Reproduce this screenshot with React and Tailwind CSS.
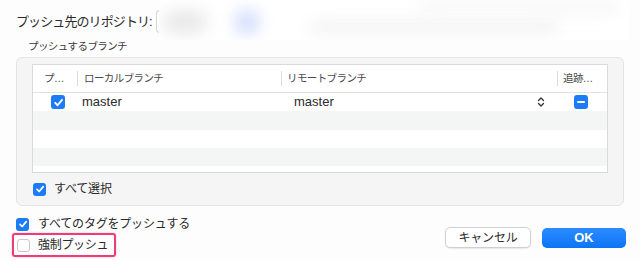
import React from 'react';

const font = { fontFamily: '"Liberation Sans", "Noto Sans CJK JP", sans-serif' };

const Check = ({ size = 13 }) => (
  <span
    className="flex items-center justify-center rounded-[3px] bg-[#1b7cf6] shrink-0"
    style={{ width: size, height: size }}
  >
    <svg width={size - 3} height={size - 3} viewBox="0 0 10 10" fill="none">
      <path d="M2 5.3 L4.2 7.5 L8.2 2.6" stroke="white" strokeWidth="1.7" strokeLinecap="round" strokeLinejoin="round" />
    </svg>
  </span>
);

const Box = () => (
  <span className="block h-[13px] w-[13px] shrink-0 rounded-[3px] border border-[#c9c9c9] bg-white" />
);

const Minus = () => (
  <span className="flex h-[14px] w-[14px] items-center justify-center rounded-[3px] bg-[#1b7cf6]">
    <span className="block h-[2px] w-[8px] rounded-full bg-white" />
  </span>
);

const Stepper = () => (
  <svg width="8" height="12" viewBox="0 0 8 12" fill="none">
    <path d="M1.5 4.5 L4 2 L6.5 4.5" stroke="#333" strokeWidth="1.3" strokeLinecap="round" strokeLinejoin="round" />
    <path d="M1.5 7.5 L4 10 L6.5 7.5" stroke="#333" strokeWidth="1.3" strokeLinecap="round" strokeLinejoin="round" />
  </svg>
);

const Divider = () => <span className="block h-[15px] w-px bg-[#dcdcdc]" />;

export default function App() {
  const rows = [0, 1, 2, 3];

  return (
    <div className="flex h-[261px] w-[640px] flex-col overflow-hidden bg-[#fdfdfd] text-[#2a2a2a]" style={font}>
      {/* repository row */}
      <div className="flex h-[40px] items-stretch">
        <span className="ml-[16px] mt-[14px] w-[135px] whitespace-nowrap text-[13px] leading-[16px] tracking-[-0.9px]">プッシュ先のリポジトリ:</span>
        <div className="ml-[5px] mt-[10px] h-[23px] w-[4px] rounded-l-[5px] border border-r-0 border-[#d6d6d6]" />
        <div className="relative -ml-[1px] h-[40px] w-[470px] overflow-hidden bg-white">
          <div className="absolute left-[4px] top-[10px] h-[24px] w-[44px] rounded-full bg-[#e9e9e9] blur-[8px]" />
          <div className="absolute left-[74px] top-[8px] h-[28px] w-[28px] rounded-full bg-[#dbe4fd] blur-[7px]" />
          <div className="absolute left-[150px] top-[20px] h-[14px] w-[250px] rounded-full bg-[#f3f3f3] blur-[8px]" />
          <div className="absolute left-[260px] top-[0px] h-[14px] w-[200px] rounded-full bg-[#f7f7f7] blur-[8px]" />
        </div>
      </div>

      {/* branches label */}
      <div className="ml-[28px] h-[17px] text-[10.5px] leading-[12px] tracking-[-0.6px] text-[#3a3a3a]">プッシュするブランチ</div>

      {/* group box */}
      <div className="mx-[16px] flex h-[149px] flex-col rounded-[6px] border border-[#e4e4e4] bg-[#f5f5f5] px-[15px] pt-[6px]">
        <div className="flex h-[109px] flex-col overflow-hidden border border-[#dadada] bg-white">
          <div className="flex h-[28px] shrink-0 items-center border-b border-[#e2e2e2] text-[10.5px] tracking-[-0.6px] text-[#4a4a4a]">
            <div className="flex w-[45px] items-center pl-[11px]">
              <span className="flex-1">プ…</span>
              <Divider />
            </div>
            <div className="flex w-[204px] items-center pl-[6px]">
              <span className="flex-1">ローカルブランチ</span>
              <Divider />
            </div>
            <div className="flex w-[276px] items-center pl-[5px]">
              <span className="flex-1">リモートブランチ</span>
              <Divider />
            </div>
            <div className="pl-[5px]">追跡…</div>
          </div>
          {rows.map((i) => (
            <div key={i} className={`flex h-[18.3px] shrink-0 items-center ${i % 2 === 1 ? 'bg-[#f4f5f5]' : 'bg-white'}`}>
              {i === 0 && (
                <>
                  <div className="w-[45px] pl-[18px]">
                    <Check size={14} />
                  </div>
                  <div className="w-[204px] pl-[4px] text-[13px]">master</div>
                  <div className="flex w-[276px] items-center pl-[12px] pr-[13px] text-[13px]">
                    <span className="flex-1">master</span>
                    <Stepper />
                  </div>
                  <div className="pl-[16px]">
                    <Minus />
                  </div>
                </>
              )}
            </div>
          ))}
        </div>
        <div className="mt-[9px] flex items-center gap-[8px] pl-[1px] text-[12px] leading-[14px]">
          <Check />
          <span className="tracking-[-0.2px]">すべて選択</span>
        </div>
      </div>

      {/* bottom */}
      <div className="flex items-start justify-between">
        <div className="flex flex-col">
          <div className="ml-[16px] mt-[11px] flex items-center gap-[9px] text-[12px] leading-[14px]">
            <Check />
            <span className="tracking-[-0.2px]">すべてのタグをプッシュする</span>
          </div>
          <div className="ml-[12px] mt-[2px] flex h-[24px] w-[104px] items-center gap-[8px] rounded-[3px] border-2 border-[#ec3d7a] pl-[3px] text-[12px] leading-[14px] shadow-[0_0_2px_rgba(236,61,122,0.4)]">
            <Box />
            <span className="tracking-[-0.3px]">強制プッシュ</span>
          </div>
        </div>
        <div className="mr-[14px] mt-[21px] flex items-center gap-[11px]">
          <button className="flex h-[21px] w-[86px] items-center justify-center rounded-[5px] border border-[#d0d0d0] bg-white text-[12px] tracking-[-0.2px] text-[#2a2a2a] shadow-[0_1px_1px_rgba(0,0,0,0.08)]">
            キャンセル
          </button>
          <button className="flex h-[20px] w-[84px] items-center justify-center rounded-[5px] bg-gradient-to-b from-[#2b8cff] to-[#0b74f4] text-[13px] font-semibold text-white">
            OK
          </button>
        </div>
      </div>
    </div>
  );
}
